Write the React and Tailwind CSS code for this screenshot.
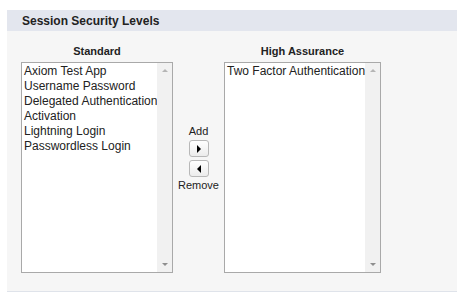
const standard = [
  'Axiom Test App',
  'Username Password',
  'Delegated Authentication',
  'Activation',
  'Lightning Login',
  'Passwordless Login',
];

const highAssurance = ['Two Factor Authentication'];

// fake classic-browser listbox with a scroll track on the right
const ListBox = ({ items, width }) => (
  <div className={`flex h-[211px] ${width} border border-[#a9a9a9] bg-white`}>
    <div className="flex-1 pl-[2px] pt-px text-[12px] leading-[15px] text-[#222]">
      {items.map((item) => (
        <div key={item} className="whitespace-nowrap">{item}</div>
      ))}
    </div>
    <div className="flex w-[15px] flex-col justify-between bg-[#f1f1f1] pt-[6px] pb-[6px] items-center">
      <div className="h-0 w-0 border-x-[3px] border-b-[3px] border-x-transparent border-b-[#b5b5b5]" />
      <div className="h-0 w-0 border-x-[3px] border-t-[3px] border-x-transparent border-t-[#8e8e8e]" />
    </div>
  </div>
);

const ArrowButton = ({ dir }) => (
  <button className="flex h-[17px] w-[20px] items-center justify-center rounded-[3px] border border-[#b8b8b8] bg-gradient-to-b from-white to-[#ececec]">
    {dir === 'right' ? (
      <div className="h-0 w-0 border-y-[4px] border-l-[4px] border-y-transparent border-l-black" />
    ) : (
      <div className="h-0 w-0 border-y-[4px] border-r-[4px] border-y-transparent border-r-black" />
    )}
  </button>
);

export default function App() {
  return (
    <div className="h-[302px] w-[465px] bg-white pt-[10px] pl-[7px] font-['Liberation_Sans',Arial,sans-serif]">
      <div className="w-[450px] border-b border-[#dfe3ea] bg-[#f6f6f6]">
        {/* Section header */}
        <div className="flex h-[21px] items-center bg-[#e3e6ee] pl-[15px] text-[12px] font-bold text-[#222]">
          Session Security Levels
        </div>

        <div className="flex pt-[13px] pb-[18px] pl-[14px]">
          <div className="flex flex-col items-center">
            <div className="mb-[4px] text-[11px] leading-[14px] font-bold text-[#222]">Standard</div>
            <ListBox items={standard} width="w-[152px]" />
          </div>

          <div className="flex w-[51px] flex-col items-center pt-[80px] text-[11px] leading-[14px] text-[#222]">
            <div className="mb-[2px]">Add</div>
            <ArrowButton dir="right" />
            <div className="h-[3px]" />
            <ArrowButton dir="left" />
            <div className="mt-px">Remove</div>
          </div>

          <div className="flex flex-col items-center">
            <div className="mb-[4px] text-[11px] leading-[14px] font-bold text-[#222]">High Assurance</div>
            <ListBox items={highAssurance} width="w-[157px]" />
          </div>
        </div>
      </div>
    </div>
  );
}
